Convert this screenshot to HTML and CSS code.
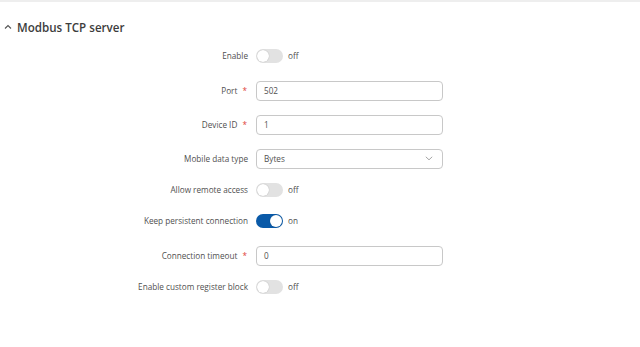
FILE: index.html
```html
<!DOCTYPE html>
<html>
<head>
<meta charset="utf-8">
<link rel="stylesheet" href="styles.css">
</head>
<body>
<div class="page">
  <div class="section-head">
    <svg class="chev" width="8" height="6" viewBox="0 0 8 6"><path d="M1 4.5 L4 1.5 L7 4.5" fill="none" stroke="#555" stroke-width="1.1"/></svg>
    <span class="title">Modbus TCP server</span>
  </div>
  <div class="form">
    <div class="row trow">
      <label class="lbl">Enable</label>
      <div class="ctl"><span class="tog"><span class="knob"></span></span><span class="state">off</span></div>
    </div>
    <div class="row">
      <label class="lbl">Port <span class="req">*</span></label>
      <div class="ctl"><div class="input">502</div></div>
    </div>
    <div class="row">
      <label class="lbl">Device ID <span class="req">*</span></label>
      <div class="ctl"><div class="input">1</div></div>
    </div>
    <div class="row">
      <label class="lbl">Mobile data type</label>
      <div class="ctl"><div class="input select">Bytes<svg class="dd" width="8" height="5" viewBox="0 0 8 5"><path d="M0.8 0.8 L4 3.8 L7.2 0.8" fill="none" stroke="#9a9a9a" stroke-width="0.9"/></svg></div></div>
    </div>
    <div class="row trow">
      <label class="lbl">Allow remote access</label>
      <div class="ctl"><span class="tog"><span class="knob"></span></span><span class="state">off</span></div>
    </div>
    <div class="row trow">
      <label class="lbl">Keep persistent connection</label>
      <div class="ctl"><span class="tog on"><span class="knob"></span></span><span class="state">on</span></div>
    </div>
    <div class="row">
      <label class="lbl">Connection timeout <span class="req">*</span></label>
      <div class="ctl"><div class="input">0</div></div>
    </div>
    <div class="row trow">
      <label class="lbl">Enable custom register block</label>
      <div class="ctl"><span class="tog"><span class="knob"></span></span><span class="state">off</span></div>
    </div>
  </div>
</div>
</body>
</html>
```

FILE: styles.css
```css
html, body { margin: 0; padding: 0; background: #fff; }
body { font-family: "Open Sans", "Noto Sans", sans-serif; color: #333; }
.page { border-top: 2px solid #eeeeee; height: 345px; }
.section-head { display: flex; align-items: center; height: 18px; margin-top: 16px; padding-left: 4px; }
.chev { margin-right: 5px; }
.title { font-size: 11.6px; font-weight: 600; color: #3c3c3c; }
.form { margin-top: 13px; display: flex; flex-direction: column; gap: 14px; }
.row { display: grid; grid-template-columns: 248px 187px; column-gap: 8px; align-items: center; height: 20px; }
.trow { height: 17.5px; align-items: start; }
.lbl { text-align: right; font-size: 8.2px; color: #505050; line-height: 14px; }
.row:not(.trow) .lbl { line-height: 20px; }
.req { color: #e0433a; margin-left: 3px; margin-right: 1px; }
.ctl { display: flex; align-items: center; }
.input { box-sizing: border-box; width: 187px; height: 20px; border: 1px solid #c8c8c8; border-radius: 4px; font-size: 8.2px; line-height: 18px; padding-left: 7px; color: #505050; display: flex; align-items: center; justify-content: space-between; padding-right: 9px; }
.tog { width: 27px; height: 14px; border-radius: 7px; background: #e2e2e2; position: relative; display: inline-block; }
.tog .knob { position: absolute; left: 1px; top: 1px; width: 12px; height: 12px; border-radius: 50%; background: #fff; box-shadow: 0 0 1px rgba(0,0,0,.3); }
.tog.on { background: #0a5aa8; }
.tog.on .knob { left: 14px; }
.state { font-size: 8.2px; margin-left: 5px; color: #505050; line-height: 14px; }
```
